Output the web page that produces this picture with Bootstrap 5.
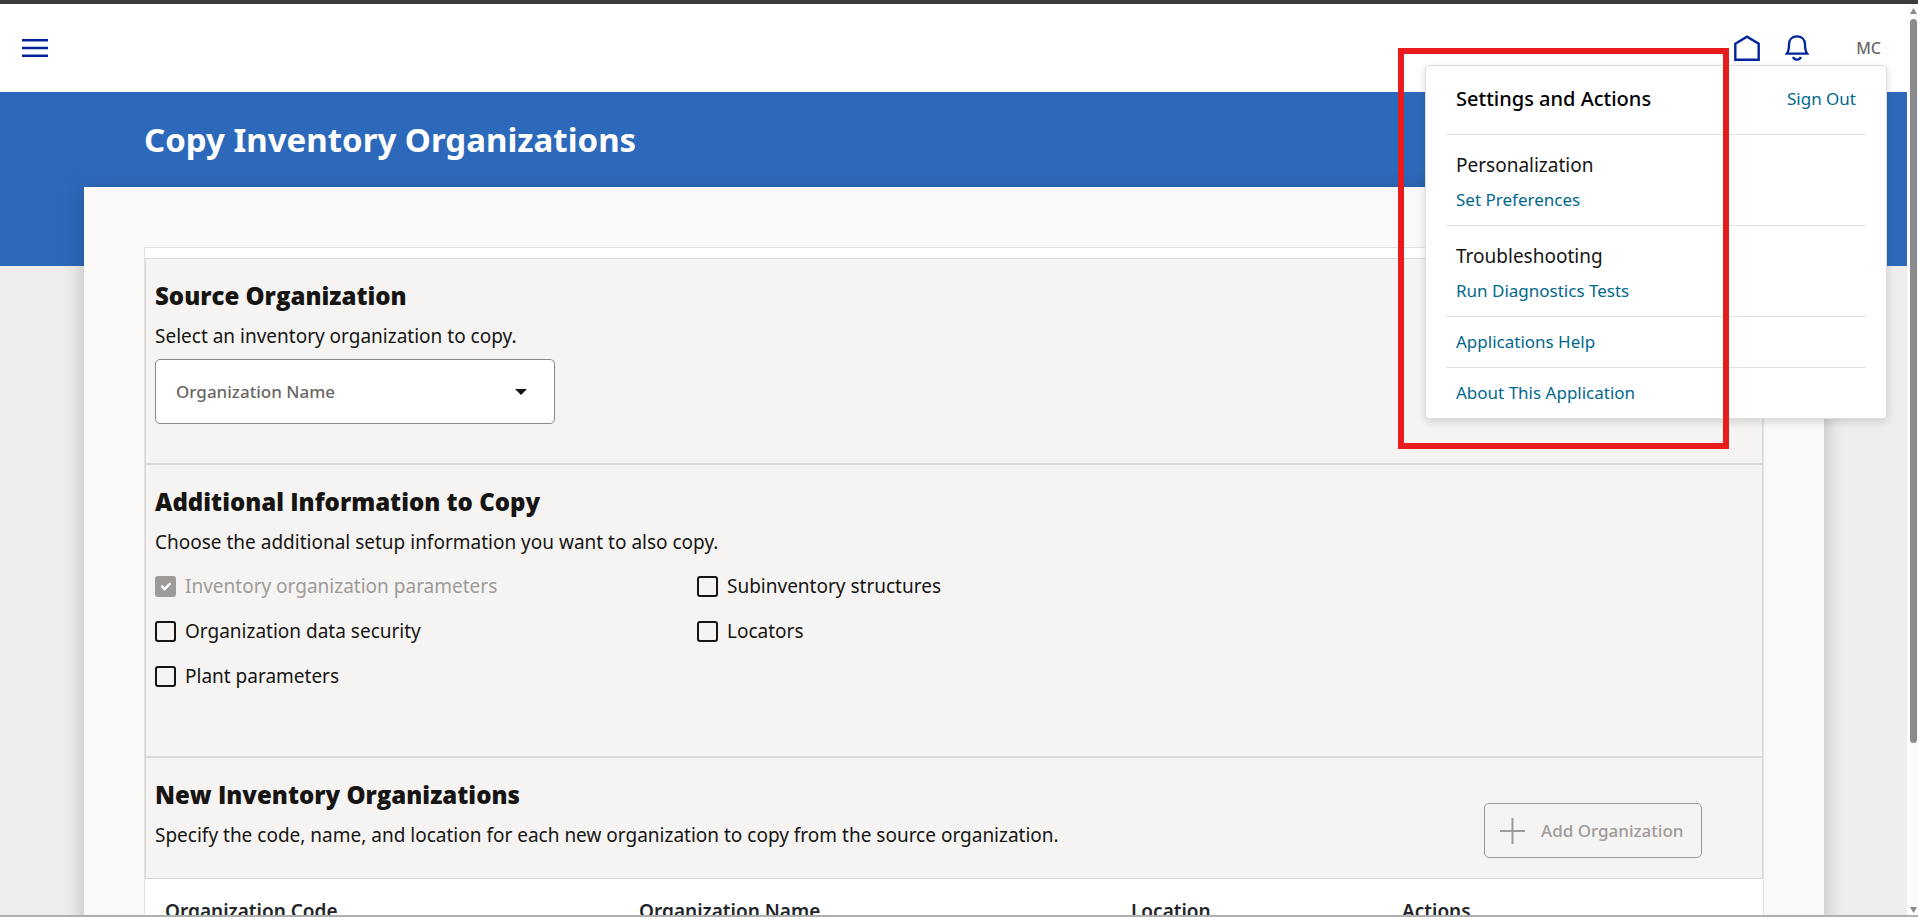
<!DOCTYPE html>
<html lang="en">
<head>
<meta charset="utf-8">
<meta name="viewport" content="width=device-width, initial-scale=1">
<title>Copy Inventory Organizations</title>
<link href="https://cdn.jsdelivr.net/npm/bootstrap@5.3.0/dist/css/bootstrap.min.css" rel="stylesheet">
<style>
  body { font-family: "Noto Sans", "Open Sans", sans-serif; font-size: 19px; line-height: 28px; color: #161513; background: #efeeec; }
  a { text-decoration: none; color: #00688c; }
  .shell { border-top: 4px solid #3c3c3c; border-bottom: 2px solid #b0b0b0; }
  .topbar { height: 88px; padding: 0 26px 0 22px; }
  .icon-btn { color: #00259b; line-height: 0; }
  .tools { gap: 25px; }
  .user-btn { font-size: 16px; line-height: 24px; font-weight: 500; color: #6a6764; margin-left: 22px; }
  .band { background: #2d69ba; padding: 24px 144px 103px; }
  .band h1 { font-size: 33px; line-height: 47px; font-weight: 700; }
  .sheet { margin: -79px 83px 0 84px; padding: 60px 60px 0; background: #faf9f7; box-shadow: 0 4px 20px rgba(0,0,0,.24); }
  .panel { border: 1px solid #e3e1df; padding-top: 10px; background: #fff; }
  .block { background: #f5f4f2; border: 1px solid #dad9d7; padding: 19px 9px 0; }
  .block h2 { font-family: "Open Sans", sans-serif; font-size: 24px; line-height: 36px; font-weight: 800; margin: 0 0 8px; }
  .block-source { padding-bottom: 39px; }
  .block-extra { padding-bottom: 66px; }
  .block-new { padding-bottom: 20px; padding-right: 60px; }
  .block-intro { padding-bottom: 9px; }
  .org-select { width: 400px; height: 65px; margin-top: 9px; padding: 0 20px; border: 1px solid #8b8886; border-radius: 5px; font-size: 17px; font-weight: 500; color: #6a6764; background-position: right 27px center; background-size: 12px 6px; background-image: url("data:image/svg+xml,%3csvg xmlns='http://www.w3.org/2000/svg' viewBox='0 0 12 6'%3e%3cpath fill='%23161513' d='M0 0h12L6 6z'/%3e%3c/svg%3e"); }
  .checks { margin-top: 16px; row-gap: 17px; grid-template-columns: 542px 1fr; }
  .checks .form-check { min-height: 28px; margin: 0; padding: 0; gap: 9px; }
  .checks .form-check-input { width: 21px; height: 21px; margin: 0; float: none; border: 2px solid #161513; border-radius: 3px; background-color: transparent; }
  .checks .form-check-input:disabled { opacity: 1; border-color: #9e9b98; background-color: #9e9b98; }
  .checks .form-check-input:disabled ~ .form-check-label { opacity: 1; color: #9e9b98; }
  .add-btn { width: 218px; height: 55px; border: 1px solid #9e9b98; border-radius: 5px; color: #9e9b98; font-size: 17px; font-weight: 500; padding: 0 15px; gap: 16px; }
  .add-btn:disabled { opacity: 1; color: #9e9b98; border-color: #9e9b98; }
  .org-table th { font-weight: 600; padding: 18px 20px; border: 0; }
  .w-code { width: 474px; } .w-name { width: 492px; } .w-loc { width: 271px; }
  .scroller { width: 11px; background: #fcfcfc; padding: 4px 1px 2px 3px; gap: 5px; }
  .thumb { width: 7px; height: 80%; border-radius: 4px; background: #8b8b8b; }
  .user-menu { position: absolute; top: 61px; right: 20px; width: 462px; padding: 12px 20px 0; background: #fff; border: 1px solid #dfdddb; border-radius: 4px; box-shadow: 0 3px 8px rgba(0,0,0,.14); font-size: 17px; z-index: 5; }
  .user-menu h2 { font-size: 20px; line-height: 32px; font-weight: 500; color: #000; margin: 0; }
  .user-menu h3 { font-size: 19px; line-height: 36px; font-weight: 400; margin: 0; }
  .menu-head { padding: 5px 10px 19px; }
  .menu-group { border-top: 1px solid #e3e1df; padding: 12px 10px 8px; }
  .menu-group a { display: block; line-height: 34px; }
  .menu-row { border-top: 1px solid #e3e1df; padding: 11px 10px; }
  .menu-row a { display: block; }
  .callout { position: absolute; left: -28px; top: -18px; width: 331px; height: 401px; border: 6px solid #e81c1c; pointer-events: none; }
</style>
</head>
<body>
<div class="shell vh-100 d-flex overflow-hidden">
  <div class="flex-grow-1 position-relative overflow-hidden">
    <header class="topbar bg-white d-flex align-items-center justify-content-between">
      <button class="icon-btn btn p-0 border-0" type="button" aria-label="Navigator">
        <svg width="26" height="18" viewBox="0 0 26 18" fill="currentColor"><path d="M0 0h26v2.5H0zM0 7.8h26v2.4H0zM0 15.5h26V18H0z"/></svg>
      </button>
      <div class="tools d-flex align-items-center">
        <a class="icon-btn" href="#" aria-label="Home">
          <svg width="26" height="26" viewBox="0 0 26 26" fill="none" stroke="currentColor" stroke-width="2.4"><path d="M1.3 8.7 13 1.6l11.7 7.1v16H1.3z"/></svg>
        </a>
        <button class="icon-btn btn p-0 border-0" type="button" aria-label="Notifications">
          <svg width="24" height="26" viewBox="0 0 24 26" fill="none" stroke="currentColor" stroke-width="2.3"><path d="M1.8 18.6c1.7-2.2 2.2-4.6 2.2-9.2C4 4.400 7.300 1.400 12 1.400s8 3 8 8c0 4.600.5 7 2.200 9.200z"/><path d="M8 22c.8 1.700 2.200 2.600 4 2.600s3.200-.9 4-2.600"/></svg>
        </button>
        <button class="user-btn btn p-0 border-0" type="button">MC</button>
      </div>
    </header>

    <div class="user-menu">
      <div class="menu-head d-flex justify-content-between align-items-center">
        <h2>Settings and Actions</h2><a href="#">Sign Out</a>
      </div>
      <div class="menu-group"><h3>Personalization</h3><a href="#">Set Preferences</a></div>
      <div class="menu-group"><h3>Troubleshooting</h3><a href="#">Run Diagnostics Tests</a></div>
      <div class="menu-row"><a href="#">Applications Help</a></div>
      <div class="menu-row"><a href="#">About This Application</a></div>
      <div class="callout"></div>
    </div>

    <div class="band text-white"><h1 class="m-0">Copy Inventory Organizations</h1></div>

    <main class="sheet position-relative">
      <div class="panel">
        <section class="block block-source">
          <h2>Source Organization</h2>
          <label for="org">Select an inventory organization to copy.</label>
          <select class="org-select form-select" id="org"><option>Organization Name</option></select>
        </section>

        <section class="block block-extra">
          <h2>Additional Information to Copy</h2>
          <p class="m-0">Choose the additional setup information you want to also copy.</p>
          <div class="checks d-grid">
            <div class="form-check d-flex align-items-center"><input class="form-check-input" type="checkbox" id="c1" checked disabled><label class="form-check-label" for="c1">Inventory organization parameters</label></div>
            <div class="form-check d-flex align-items-center"><input class="form-check-input" type="checkbox" id="c2"><label class="form-check-label" for="c2">Subinventory structures</label></div>
            <div class="form-check d-flex align-items-center"><input class="form-check-input" type="checkbox" id="c3"><label class="form-check-label" for="c3">Organization data security</label></div>
            <div class="form-check d-flex align-items-center"><input class="form-check-input" type="checkbox" id="c4"><label class="form-check-label" for="c4">Locators</label></div>
            <div class="form-check d-flex align-items-center"><input class="form-check-input" type="checkbox" id="c5"><label class="form-check-label" for="c5">Plant parameters</label></div>
          </div>
        </section>

        <section class="block block-new d-flex justify-content-between align-items-end">
          <div class="block-intro">
            <h2>New Inventory Organizations</h2>
            <p class="m-0">Specify the code, name, and location for each new organization to copy from the source organization.</p>
          </div>
          <button class="add-btn btn d-flex align-items-center" type="button" disabled>
            <svg width="25" height="26" viewBox="0 0 25 26" fill="none" stroke="currentColor" stroke-width="2"><path d="M0 13h25M12.500 0v26"/></svg>
            Add Organization
          </button>
        </section>

        <table class="org-table table mb-0">
          <thead><tr><th class="w-code">Organization Code</th><th class="w-name">Organization Name</th><th class="w-loc">Location</th><th>Actions</th></tr></thead>
        </table>
      </div>
    </main>
  </div>

  <div class="scroller d-flex flex-column align-items-center" aria-hidden="true">
    <svg width="7" height="6" viewBox="0 0 7 6" fill="#8b8b8b"><path d="M3.500 0 7 6H0z"/></svg>
    <div class="thumb"></div>
    <svg class="mt-auto" width="7" height="6" viewBox="0 0 7 6" fill="#8b8b8b"><path d="M0 0h7L3.500 6z"/></svg>
  </div>
</div>
<script src="https://cdn.jsdelivr.net/npm/bootstrap@5.3.0/dist/js/bootstrap.bundle.min.js"></script>
</body>
</html>
